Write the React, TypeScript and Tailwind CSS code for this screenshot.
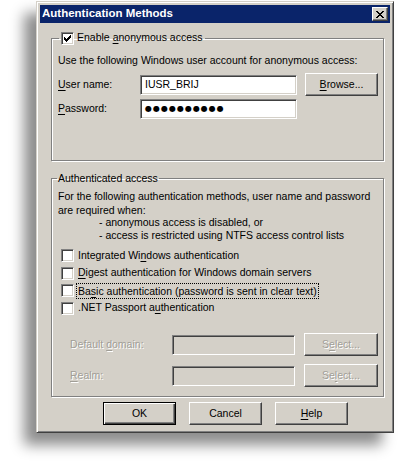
import type { ReactNode } from "react";

const face = "bg-[#d4d0c8]";
const disabledText = "text-[#a19e97] [text-shadow:1px_1px_0_#ffffff]";

function Raised({ children, w, def, disabled }: { children: ReactNode; w: string; def?: boolean; disabled?: boolean }) {
  const frame = def
    ? "border border-black shadow-[inset_1px_1px_0_#ffffff,inset_-1px_-1px_0_#404040,inset_-2px_-2px_0_#808080]"
    : "border border-t-white border-l-white border-r-[#404040] border-b-[#404040] shadow-[inset_-1px_-1px_0_#808080]";
  return (
    <div className={`${w} h-[23px] ${face} ${frame} flex items-center justify-center ${disabled ? disabledText : "text-black"}`}>
      {children}
    </div>
  );
}

function Field({ children, w, disabled }: { children?: ReactNode; w: string; disabled?: boolean }) {
  return (
    <div
      className={`${w} h-[20px] ${disabled ? face : "bg-white"} border border-t-[#808080] border-l-[#808080] border-b-white border-r-white shadow-[inset_1px_1px_0_#404040,inset_-1px_-1px_0_#d4d0c8] flex items-center pl-[4px] text-black`}
    >
      {children}
    </div>
  );
}

function Box({ checked }: { checked?: boolean }) {
  return (
    <div className="w-[13px] h-[13px] shrink-0 bg-white border border-t-[#808080] border-l-[#808080] border-b-white border-r-white shadow-[inset_1px_1px_0_#404040,inset_-1px_-1px_0_#d4d0c8] flex items-center justify-center">
      {checked && (
        <svg width="7" height="7" viewBox="0 0 7 7">
          <path d="M0 2h1v1h1v1h1V3h1V2h1V1h1V0h1v3H6v1H5v1H4v1H3v1H2V6H1V5H0z" fill="#000" />
        </svg>
      )}
    </div>
  );
}

function U({ children }: { children: ReactNode }) {
  return <span className="underline underline-offset-[2px]">{children}</span>;
}

function Check({ children, focus }: { children: ReactNode; focus?: boolean }) {
  return (
    <div className="h-[17.5px] flex items-center gap-[3px]">
      <Box />
      <span className={focus ? "outline-1 outline-dotted outline-black px-[1px] leading-[14px]" : "px-[1px]"}>{children}</span>
    </div>
  );
}

export default function App() {
  return (
    <div className="w-[400px] h-[467px] bg-white pt-[1px] pl-[36px] overflow-hidden" style={{ fontFamily: '"Liberation Sans", Arial, sans-serif' }}>
      <div className="w-[358px] h-[432px] bg-[#d4d0c8] border border-t-[#d4d0c8] border-l-[#d4d0c8] border-r-[#404040] border-b-[#404040] shadow-[inset_1px_1px_0_#ffffff,inset_-1px_-1px_0_#808080,-12px_12px_13px_rgba(0,0,0,0.45)] p-[3px] flex flex-col text-[10.5px] text-black">
        <div className="h-[18px] bg-[#0a246a] flex items-center justify-between pl-[2px] pr-[2px]">
          <span className="text-white font-bold text-[11.5px]">Authentication Methods</span>
          <div className="w-[16px] h-[14px] bg-[#d4d0c8] border border-t-white border-l-white border-r-[#404040] border-b-[#404040] shadow-[inset_-1px_-1px_0_#808080] flex items-center justify-center">
            <svg width="8" height="7" viewBox="0 0 8 7">
              <path d="M0 0h2v1h1v1h2V1h1V0h2v1H7v1H6v1H5v1h1v1h1v1h1v1H6V6H5V5H3v1H2v1H0V6h1V5h1V4h1V3H2V2H1V1H0z" fill="#000" />
            </svg>
          </div>
        </div>

        <div className="pl-[11px] pr-[6px] flex flex-col">
          <fieldset className="mt-[8px] border border-[#808080] shadow-[1px_1px_0_#ffffff,inset_1px_1px_0_#ffffff] pb-[41px] pl-[6px]">
            <legend className="ml-[1px] px-[2px] h-[14px] flex items-center gap-[3px]">
              <Box checked />
              <span>Enable <U>a</U>nonymous access</span>
            </legend>
            <div className="pt-[9px] leading-[13px]">Use the following Windows user account for anonymous access:</div>
            <div className="mt-[6px] flex items-center">
              <span className="w-[82px]"><U>U</U>ser name:</span>
              <Field w="w-[157px]"><span>IUSR_BRIJ</span></Field>
              <div className="ml-[8px]">
                <Raised w="w-[73px]"><span><U>B</U>rowse...</span></Raised>
              </div>
            </div>
            <div className="mt-[3px] flex items-center">
              <span className="w-[82px]"><U>P</U>assword:</span>
              <Field w="w-[157px]"><span className="text-[8px] tracking-[1px] leading-none" style={{ fontFamily: '"DejaVu Sans", sans-serif' }}>●●●●●●●●●●</span></Field>
            </div>
          </fieldset>

          <fieldset className="mt-[11px] border border-[#808080] shadow-[1px_1px_0_#ffffff,inset_1px_1px_0_#ffffff] pb-[9px]">
            <legend className="ml-[5px] px-[1px] h-[13px] flex items-center">Authenticated access</legend>
            <div className="pl-[6px] pt-[4px] leading-[14px]">
              For the following authentication methods, user name and password are required when:
            </div>
            <div className="pl-[47px] -mt-[1px] leading-[12.5px]">
              <div>- anonymous access is disabled, or</div>
              <div>- access is restricted using NTFS access control lists</div>
            </div>
            <div className="pl-[9px] mt-[6px] flex flex-col">
              <Check>Integrated Wi<U>n</U>dows authentication</Check>
              <Check><U>D</U>igest authentication for Windows domain servers</Check>
              <Check focus>Ba<U>s</U>ic authentication (password is sent in clear text)</Check>
              <Check>.NET Passport a<U>u</U>thentication</Check>
            </div>
            <div className="mt-[16px] flex flex-col gap-[8px] pl-[18px]">
              <div className="flex items-center">
                <span className={`w-[102px] ${disabledText}`}>Default <U>d</U>omain:</span>
                <Field w="w-[123px]" disabled />
                <div className="ml-[9px]">
                  <Raised w="w-[74px]" disabled><span>S<U>e</U>lect...</span></Raised>
                </div>
              </div>
              <div className="flex items-center">
                <span className={`w-[102px] ${disabledText}`}><U>R</U>ealm:</span>
                <Field w="w-[123px]" disabled />
                <div className="ml-[9px]">
                  <Raised w="w-[74px]" disabled><span>Se<U>l</U>ect...</span></Raised>
                </div>
              </div>
            </div>
          </fieldset>

          <div className="mt-[5px] pl-[52px] flex gap-[13px]">
            <Raised w="w-[73px]" def>OK</Raised>
            <Raised w="w-[73px]">Cancel</Raised>
            <Raised w="w-[73px]"><span><U>H</U>elp</span></Raised>
          </div>
        </div>
      </div>
    </div>
  );
}
